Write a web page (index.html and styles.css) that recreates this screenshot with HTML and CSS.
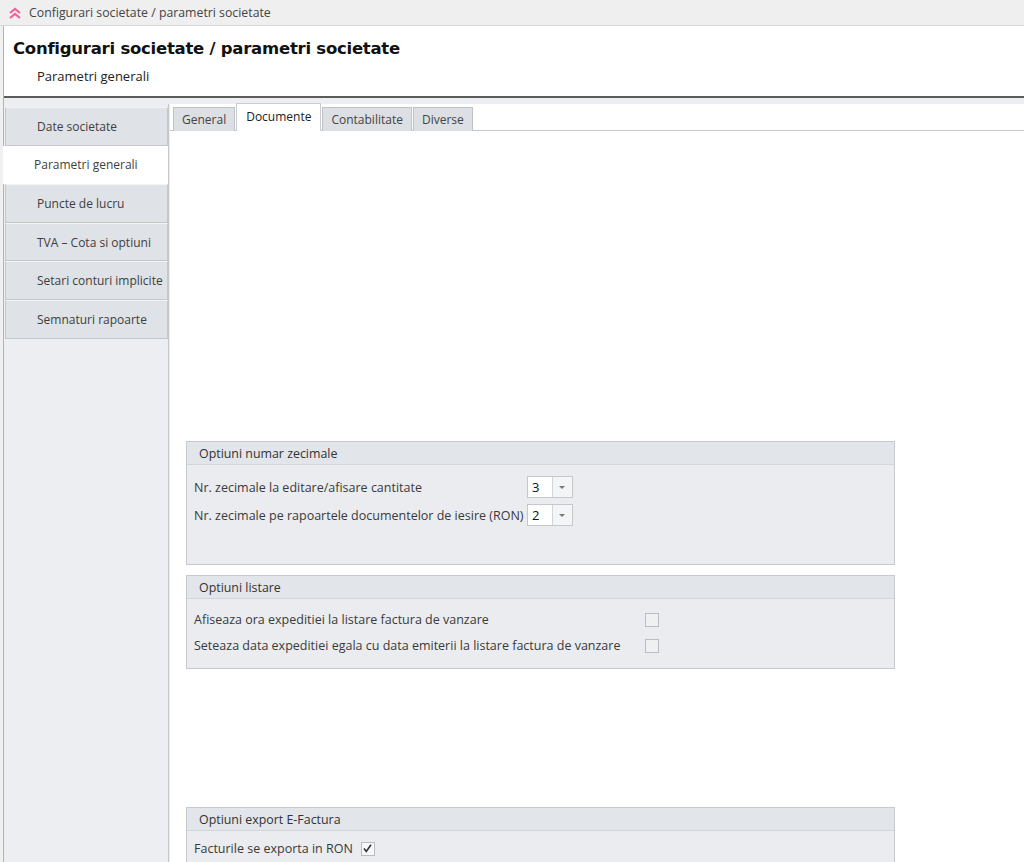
FILE: index.html
```html
<!DOCTYPE html>
<html lang="ro">

<head>
    <meta charset="UTF-8">
    <title>Configurari societate / parametri societate</title>
    <link rel="stylesheet" href="styles.css">
</head>

<body>

    <!-- Title bar of the window -->
    <div class="titlebar">
        <svg class="titlebar-icon" width="14" height="14" viewBox="0 0 14 14">
            <path d="M2 7 L7 3 L12 7" fill="none" stroke="#f0609a" stroke-width="2.2" />
            <path d="M2 12 L7 8 L12 12" fill="none" stroke="#f0609a" stroke-width="2.2" />
        </svg>
        <span>Configurari societate / parametri societate</span>
    </div>

    <div class="window">
        <!-- Page header -->
        <div class="header">
            <div class="header-title">Configurari societate / parametri societate</div>
            <div class="header-sub">Parametri generali</div>
        </div>

        <div class="main">
            <!-- Left navigation -->
            <div class="nav">
                <div class="nav-item">Date societate</div>
                <div class="nav-item active">Parametri generali</div>
                <div class="nav-item">Puncte de lucru</div>
                <div class="nav-item">TVA &ndash; Cota si optiuni</div>
                <div class="nav-item">Setari conturi implicite</div>
                <div class="nav-item">Semnaturi rapoarte</div>
            </div>

            <!-- Tabs and their content -->
            <div class="tabs">
                <div class="tab-strip">
                    <div class="tab">General</div>
                    <div class="tab selected">Documente</div>
                    <div class="tab">Contabilitate</div>
                    <div class="tab">Diverse</div>
                </div>

                <div class="tab-page">
                    <div class="group group-decimals">
                        <div class="group-head">Optiuni numar zecimale</div>
                        <div class="group-body">
                            <div class="row">
                                <span class="label label-decimals">Nr. zecimale la editare/afisare cantitate</span>
                                <div class="combo"><span class="combo-value">3</span><span class="combo-btn"></span></div>
                            </div>
                            <div class="row">
                                <span class="label label-decimals">Nr. zecimale pe rapoartele documentelor de iesire (RON)</span>
                                <div class="combo"><span class="combo-value">2</span><span class="combo-btn"></span></div>
                            </div>
                        </div>
                    </div>

                    <div class="group group-print">
                        <div class="group-head">Optiuni listare</div>
                        <div class="group-body">
                            <div class="row">
                                <span class="label label-print">Afiseaza ora expeditiei la listare factura de vanzare</span>
                                <span class="check"></span>
                            </div>
                            <div class="row">
                                <span class="label label-print">Seteaza data expeditiei egala cu data emiterii la listare factura de vanzare</span>
                                <span class="check"></span>
                            </div>
                        </div>
                    </div>

                    <div class="group group-export">
                        <div class="group-head">Optiuni export E-Factura</div>
                        <div class="group-body">
                            <div class="row">
                                <span class="label">Facturile se exporta in RON</span>
                                <span class="check checked">
                                    <svg width="11" height="11" viewBox="0 0 11 11">
                                        <path d="M2 5.5 L4.3 8.5 L9 1.8" fill="none" stroke="#333" stroke-width="1.6" />
                                    </svg>
                                </span>
                            </div>
                        </div>
                    </div>
                </div>
            </div>
        </div>
    </div>

</body>

</html>
```

FILE: styles.css
```css
/* Reset */
* {
    margin: 0;
    padding: 0;
    box-sizing: border-box;
}

body {
    width: 1024px;
    height: 862px;
    overflow: hidden;
    background: #f0f0f0;
    font-family: "Open Sans", "Liberation Sans", sans-serif;
    font-size: 12px;
    color: #3b3b3b;
}

/* Window title bar */
.titlebar {
    height: 26px;
    display: flex;
    align-items: center;
    gap: 7px;
    padding-left: 8px;
    background: #efefef;
    border-bottom: 1px solid #d6d6d6;
    color: #444;
    font-size: 12.3px;
}

.titlebar-icon {
    flex: none;
}

/* Window body */
.window {
    margin-left: 3px;
    border-left: 1px solid #b4b4b4;
    height: 836px;
    display: flex;
    flex-direction: column;
}

/* Header */
.header {
    height: 72px;
    background: #fff;
    border-bottom: 2px solid #5c5c5c;
    padding: 13px 0 0 9px;
}

.header-title {
    font-family: "DejaVu Sans", sans-serif;
    font-size: 16.5px;
    font-weight: bold;
    color: #111;
    letter-spacing: -0.25px;
}

.header-sub {
    margin: 9px 0 0 24px;
    font-size: 13px;
    color: #222;
}

/* Main area below the header */
.main {
    flex: 1;
    display: flex;
    background: #eceef1;
    padding-top: 6px;
    min-height: 0;
}

/* Left navigation */
.nav {
    width: 165px;
    flex: none;
    border-right: 1px solid #c3c6cb;
    padding: 3px 0 0 1px;
}

.nav-item {
    height: 38.6px;
    display: flex;
    align-items: center;
    padding-left: 31px;
    background: #dfe2e6;
    border: 1px solid #c4c7cc;
    border-top-color: #f2f3f5;
    font-size: 12px;
    color: #3e3e3e;
}

.nav-item.active {
    background: #fff;
    border-color: #fff;
    padding-left: 30px;
    margin-left: -2px;
}

/* Tab control */
.tabs {
    flex: 1;
    display: flex;
    flex-direction: column;
    margin-left: 1px;
    min-width: 0;
}

.tab-strip {
    height: 27px;
    display: flex;
    align-items: flex-end;
    padding-left: 3px;
    background: #fff;
    border-bottom: 1px solid #c5c8cd;
}

.tab {
    height: 24px;
    display: flex;
    align-items: center;
    padding: 0 8px;
    margin-bottom: -1px;
    background: #dcdfe3;
    border: 1px solid #bfc3c8;
    border-bottom: none;
    color: #444;
    font-size: 12px;
}

.tab+.tab {
    margin-left: 1px;
}

.tab.selected {
    height: 28px;
    background: #fff;
    padding: 0 9px 2px;
    color: #222;
    border-color: #c9ccd1;
}

/* Content of the selected tab */
.tab-page {
    flex: 1;
    background: #fff;
    padding: 310px 0 0 16px;
}

/* Group boxes */
.group {
    width: 709px;
    border: 1px solid #c6c9ce;
    background: #eaecf0;
}

.group-head {
    height: 23px;
    display: flex;
    align-items: center;
    padding-left: 12px;
    background: #e2e5ea;
    border-bottom: 1px solid #d3d6db;
    color: #333;
    font-size: 12.4px;
}

.group-body {
    padding: 11px 0 0 7px;
    display: flex;
    flex-direction: column;
}

.group-decimals {
    height: 124px;
}

.group-decimals .group-body {
    gap: 6px;
}

.group-print {
    height: 94px;
    margin-top: 10px;
}

.group-print .group-body {
    padding-top: 12px;
    gap: 9px;
}

.group-export {
    height: 60px;
    margin-top: 138px;
}

.group-export .group-body {
    padding-top: 9px;
}

.row {
    display: flex;
    align-items: center;
}

.label {
    color: #3a3a3a;
    font-size: 12.5px;
    white-space: nowrap;
    margin-right: 8px;
}

.label-decimals {
    width: 325px;
}

.label-print {
    width: 443px;
}

/* Combo box */
.combo {
    width: 46px;
    height: 22px;
    display: flex;
    border: 1px solid #c4c7cc;
    background: #fff;
}

.combo-value {
    flex: 1;
    padding-left: 4px;
    line-height: 20px;
    color: #111;
    font-size: 13px;
}

.combo-btn {
    width: 20px;
    border-left: 1px solid #d2d5da;
    background: #f4f5f7;
    position: relative;
}

.combo-btn::after {
    content: "";
    position: absolute;
    left: 6px;
    top: 9px;
    border-left: 3.5px solid transparent;
    border-right: 3.5px solid transparent;
    border-top: 3.5px solid #777;
}

/* Check boxes */
.check {
    width: 14px;
    height: 14px;
    border: 1px solid #b9bcc1;
    background: #eff0f2;
    display: flex;
    align-items: center;
    justify-content: center;
}

.check.checked {
    background: #f6f7f8;
}
```
